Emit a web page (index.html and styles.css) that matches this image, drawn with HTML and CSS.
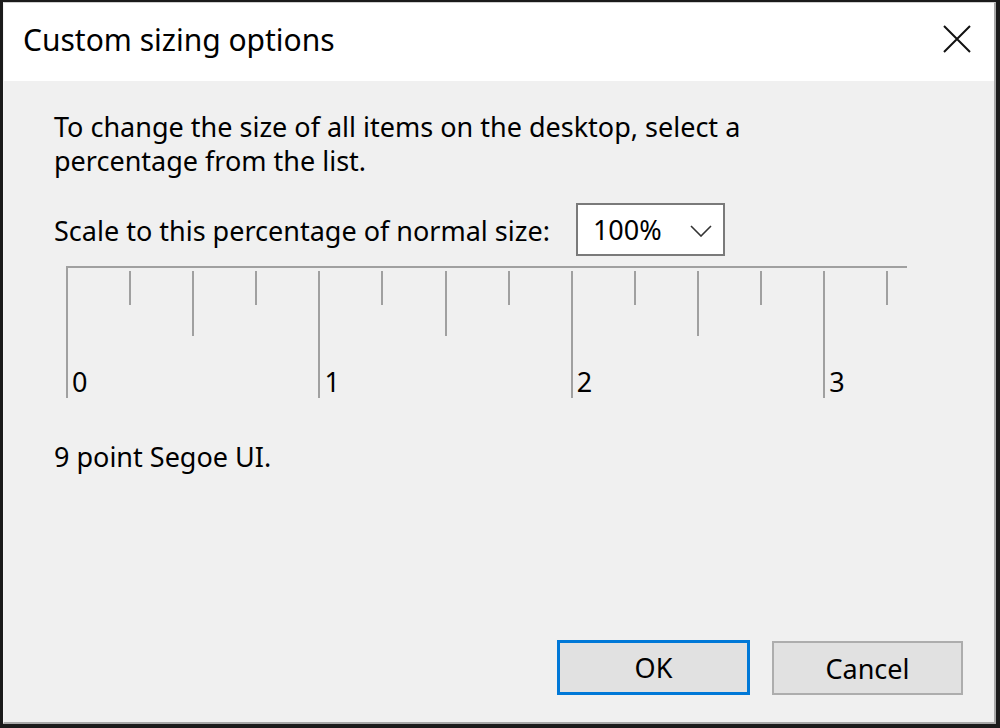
FILE: index.html
```html
<!DOCTYPE html>
<html lang="en">
<head>
<meta charset="utf-8">
<title>Custom sizing options</title>
<link rel="stylesheet" href="styles.css">
</head>
<body>
<div class="window">
  <div class="titlebar">
    <div class="title">Custom sizing options</div>
    <div class="close" aria-label="Close">
      <svg width="28" height="28" viewBox="0 0 28 28"><path d="M1 1 L27 27 M27 1 L1 27" stroke="#111" stroke-width="2" fill="none"/></svg>
    </div>
  </div>
  <div class="content">
    <p class="intro">To change the size of all items on the desktop, select a percentage from the list.</p>
    <div class="scale-row">
      <span class="scale-label">Scale to this percentage of normal size:</span>
      <div class="select">
        <span class="select-value">100%</span>
        <svg class="chevron" width="22" height="12" viewBox="0 0 22 12"><path d="M1 1 L11 11 L21 1" stroke="#333" stroke-width="1.6" fill="none"/></svg>
      </div>
    </div>
    <div class="ruler">
      <div class="cell first"><span class="num">0</span></div>
      <div class="cell"><span class="tick minor"></span></div>
      <div class="cell"><span class="tick medium"></span></div>
      <div class="cell"><span class="tick minor"></span></div>
      <div class="cell"><span class="tick major"></span><span class="num">1</span></div>
      <div class="cell"><span class="tick minor"></span></div>
      <div class="cell"><span class="tick medium"></span></div>
      <div class="cell"><span class="tick minor"></span></div>
      <div class="cell"><span class="tick major"></span><span class="num">2</span></div>
      <div class="cell"><span class="tick minor"></span></div>
      <div class="cell"><span class="tick medium"></span></div>
      <div class="cell"><span class="tick minor"></span></div>
      <div class="cell"><span class="tick major"></span><span class="num">3</span></div>
      <div class="cell last"><span class="tick minor"></span></div>
    </div>
    <p class="font-note">9 point Segoe UI.</p>
    <div class="buttons">
      <button class="btn btn-default">OK</button>
      <button class="btn">Cancel</button>
    </div>
  </div>
</div>
</body>
</html>
```

FILE: styles.css
```css
html, body {
  margin: 0;
  padding: 0;
}
body {
  background: #1b1b1b;
  font-family: "Noto Sans", "Open Sans", sans-serif;
  color: #000;
  width: 1000px;
  height: 728px;
  overflow: hidden;
}
.window {
  box-sizing: border-box;
  margin: 2px 4px 4px 3px;
  height: 722px;
  display: flex;
  flex-direction: column;
  border-top: 1px solid #cfcfcf;
  border-left: 1px solid #f4f4f4;
  border-right: 2px solid #a8a8a8;
  border-bottom: 2px solid #a8a8a8;
}
.titlebar {
  height: 78px;
  flex: 0 0 78px;
  background: #fff;
  display: flex;
  align-items: center;
  justify-content: space-between;
  padding: 0 23px 0 19px;
}
.title {
  font-size: 30px;
  line-height: 30px;
  margin-top: -4px;
}
.close {
  width: 28px;
  height: 28px;
  margin-top: -6px;
}
.close svg {
  display: block;
}
.content {
  flex: 1;
  background: #f0f0f0;
  display: flex;
  flex-direction: column;
  padding: 29px 31px 27px 50px;
  font-size: 27px;
  line-height: 34px;
}
.intro {
  margin: 0;
  width: 720px;
}
.scale-row {
  display: flex;
  align-items: center;
  margin-top: 25px;
  height: 53px;
}
.scale-label {
  margin-top: 2px;
}
.select {
  box-sizing: border-box;
  margin-left: 26px;
  width: 149px;
  height: 53px;
  background: #fff;
  border: 2px solid #7a7a7a;
  display: flex;
  align-items: center;
  justify-content: space-between;
  padding: 0 11px 0 15px;
}
.select-value {
  margin-top: 1px;
}
.chevron {
  display: block;
  margin-top: 2px;
}
.ruler {
  box-sizing: border-box;
  display: flex;
  width: 841px;
  height: 132px;
  margin-top: 10px;
  margin-left: 12px;
  border-top: 2px solid #a0a0a0;
  border-left: 2px solid #a0a0a0;
}
.cell {
  flex: 0 0 63.1px;
  display: flex;
  align-items: flex-start;
}
.cell.first {
  flex-basis: 61.1px;
}
.cell.last {
  flex-basis: 21px;
}
.tick {
  display: block;
  width: 2px;
  margin-top: 3px;
  background: #a0a0a0;
  flex: 0 0 2px;
}
.tick.minor { height: 34px; }
.tick.medium { height: 65px; }
.tick.major { height: 127px; }
.num {
  align-self: flex-end;
  line-height: 34px;
  margin: 0 0 -1px 4px;
}
.font-note {
  margin: 42px 0 0 0;
}
.buttons {
  margin-top: auto;
  display: flex;
  justify-content: flex-end;
  align-items: flex-start;
  gap: 22px;
}
.btn {
  box-sizing: border-box;
  font-family: inherit;
  font-size: 27px;
  color: #000;
  background: #e1e1e1;
  border: 2px solid #adadad;
  height: 54px;
  width: 191px;
  padding: 0;
  margin: 1px 0 0 0;
}
.btn-default {
  width: 193px;
  height: 55px;
  margin-top: 0;
  border: 3px solid #0078d7;
}
```
